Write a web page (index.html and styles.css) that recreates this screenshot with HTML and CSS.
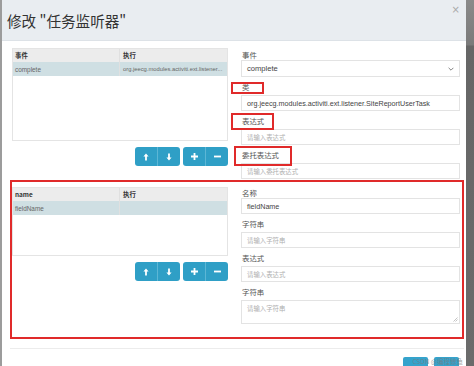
FILE: index.html
```html
<!DOCTYPE html>
<html lang="zh-CN">
<head>
<meta charset="utf-8">
<title>修改 任务监听器</title>
<link rel="stylesheet" href="styles.css">
</head>
<body>
<div class="page">
  <div class="edge-left"></div>
  <div class="modal">
    <header class="modal-header">
      <h1 class="modal-title">修改 "任务监听器"</h1>
      <span class="close">×</span>
    </header>
    <div class="modal-body">
      <section class="group">
        <div class="col-left">
          <div class="table table-tall">
            <div class="tr th"><div class="c1">事件</div><div class="c2">执行</div></div>
            <div class="tr sel"><div class="c1">complete</div><div class="c2 c2-long">org.jeecg.modules.activiti.ext.listener...</div></div>
          </div>
          <div class="btn-row">
            <div class="btn-group">
              <span class="btn"><svg width="6" height="8" viewBox="0 0 6 8"><path d="M3 0.5 L5.6 3.4 L3.9 3.4 L3.9 7.5 L2.1 7.5 L2.1 3.4 L0.4 3.4 Z" fill="#fff"/></svg></span>
              <span class="btn"><svg width="6" height="8" viewBox="0 0 6 8"><path d="M3 7.5 L5.6 4.6 L3.9 4.6 L3.9 0.5 L2.1 0.5 L2.1 4.6 L0.4 4.6 Z" fill="#fff"/></svg></span>
            </div>
            <div class="btn-group">
              <span class="btn"><svg width="7" height="7" viewBox="0 0 7 7"><path d="M2.6 0 H4.4 V2.6 H7 V4.4 H4.4 V7 H2.6 V4.4 H0 V2.6 H2.6 Z" fill="#fff"/></svg></span>
              <span class="btn"><svg width="7" height="7" viewBox="0 0 7 7"><rect x="0" y="2.6" width="7" height="1.8" fill="#fff"/></svg></span>
            </div>
          </div>
        </div>
        <div class="col-right">
          <label class="lbl lbl-first">事件</label>
          <div class="field select"><span>complete</span><svg class="chev" width="6" height="4" viewBox="0 0 6 4"><path d="M0.6 0.8 L3 3.2 L5.4 0.8" fill="none" stroke="#777" stroke-width="0.9"/></svg></div>
          <label class="lbl"><span class="mark mark-1"></span>类</label>
          <div class="field">org.jeecg.modules.activiti.ext.listener.SiteReportUserTask</div>
          <label class="lbl"><span class="mark mark-2"></span>表达式</label>
          <div class="field ph">请输入表达式</div>
          <label class="lbl"><span class="mark mark-3"></span>委托表达式</label>
          <div class="field ph">请输入委托表达式</div>
        </div>
      </section>

      <section class="group group-marked">
        <div class="col-left">
          <div class="table table-short">
            <div class="tr th"><div class="c1">name</div><div class="c2">执行</div></div>
            <div class="tr sel"><div class="c1">fieldName</div><div class="c2"></div></div>
          </div>
          <div class="btn-row">
            <div class="btn-group">
              <span class="btn"><svg width="6" height="8" viewBox="0 0 6 8"><path d="M3 0.5 L5.6 3.4 L3.9 3.4 L3.9 7.5 L2.1 7.5 L2.1 3.4 L0.4 3.4 Z" fill="#fff"/></svg></span>
              <span class="btn"><svg width="6" height="8" viewBox="0 0 6 8"><path d="M3 7.5 L5.6 4.6 L3.9 4.6 L3.9 0.5 L2.1 0.5 L2.1 4.6 L0.4 4.6 Z" fill="#fff"/></svg></span>
            </div>
            <div class="btn-group">
              <span class="btn"><svg width="7" height="7" viewBox="0 0 7 7"><path d="M2.6 0 H4.4 V2.6 H7 V4.4 H4.4 V7 H2.6 V4.4 H0 V2.6 H2.6 Z" fill="#fff"/></svg></span>
              <span class="btn"><svg width="7" height="7" viewBox="0 0 7 7"><rect x="0" y="2.6" width="7" height="1.8" fill="#fff"/></svg></span>
            </div>
          </div>
        </div>
        <div class="col-right">
          <label class="lbl lbl-first">名称</label>
          <div class="field">fieldName</div>
          <label class="lbl">字符串</label>
          <div class="field ph">请输入字符串</div>
          <label class="lbl">表达式</label>
          <div class="field ph">请输入表达式</div>
          <label class="lbl">字符串</label>
          <div class="field ph textarea">请输入字符串<svg class="grip" width="5" height="5" viewBox="0 0 5 5"><path d="M4.5 0.5 L0.5 4.5 M4.5 2.5 L2.5 4.5" stroke="#aaa" stroke-width="0.7"/></svg></div>
        </div>
      </section>
    </div>
    <footer class="modal-footer">
      <span class="fbtn"></span>
      <span class="fbtn"></span>
      <span class="watermark">CSDN @编程鲸鱼</span>
    </footer>
  </div>
  <div class="edge-right"></div>
</div>
</body>
</html>
```

FILE: styles.css
```css
* { box-sizing: border-box; }
html, body { margin: 0; padding: 0; }
body {
  width: 474px;
  height: 366px;
  overflow: hidden;
  font-family: "Liberation Sans", "Noto Sans CJK SC", sans-serif;
  color: #555;
  background: #fff;
}
.page {
  display: flex;
  height: 366px;
  overflow: hidden;
}
.edge-left {
  width: 2px;
  background: #9c9c9c;
  flex: none;
}
.edge-right {
  width: 8px;
  flex: none;
  background: linear-gradient(to bottom, #8a8a8a 0, #7a7a7a 45px, #666 46px, #6b6b6b 100%);
}
.modal {
  width: 464px;
  flex: none;
  background: #fff;
  display: flex;
  flex-direction: column;
  position: relative;
  overflow: hidden;
}
.modal > * { flex: none; }
.modal-header {
  height: 41px;
  background: #e9edf1;
  border-bottom: 1px solid #dde2e7;
  display: flex;
  align-items: center;
  padding: 0 6px 0 5px;
  position: relative;
}
.modal-title {
  margin: 0;
  font-family: "Noto Sans CJK SC", sans-serif;
  font-weight: 400;
  font-size: 14.6px;
  line-height: 18px;
  color: #333;
  margin-top: 2px;
}
.close {
  position: absolute;
  right: 6px;
  top: 4px;
  font-size: 10px;
  color: #aaa;
  font-family: "DejaVu Sans", sans-serif;
}
.modal-body {
  padding: 2px 2px 0 8px;
  display: flex;
  flex-direction: column;
}
.group {
  display: flex;
  gap: 13px;
  padding: 5px 2px 0 2px;
}
.group-marked {
  margin-top: 1px;
  border: 2px solid #e02a2a;
  padding: 5px 0 13px 0;
}
.col-left {
  width: 216px;
  flex: none;
  display: flex;
  flex-direction: column;
}
.col-right {
  width: 219px;
  flex: none;
  display: flex;
  flex-direction: column;
}
.table {
  border: 1px solid #e4e4e4;
  background: #fff;
}
.table-tall { height: 93px; }
.table-short { height: 69px; }
.tr {
  display: flex;
  height: 14px;
  align-items: center;
  font-size: 6.4px;
}
.th {
  background: #ececec;
  color: #333;
  font-weight: 700;
  height: 13px;
}
.sel {
  background: #cfdfe3;
  color: #666;
}
.c1 {
  width: 107px;
  flex: none;
  padding-left: 2px;
  height: 100%;
  display: flex;
  align-items: center;
  border-right: 1px solid #e0e0e0;
}
.c2 {
  flex: 1;
  min-width: 0;
  padding: 0 2px 0 3px;
  white-space: nowrap;
  overflow: hidden;
  line-height: 14px;
}
.c2-long { font-size: 5.8px; }
.th .c1, .th .c2 { font-family: "Noto Sans CJK SC", sans-serif; font-weight: 700; }
.btn-row {
  display: flex;
  justify-content: flex-end;
  gap: 3px;
  margin-top: 6px;
}
.btn-group {
  display: flex;
  border-radius: 3px;
  overflow: hidden;
}
.btn {
  width: 22px;
  height: 19px;
  background: #2f9fc6;
  display: flex;
  align-items: center;
  justify-content: center;
}
.btn + .btn { border-left: 1px solid #5cb6d5; width: 23px; }
.lbl {
  position: relative;
  display: flex;
  align-items: center;
  height: 18px;
  padding-left: 1px;
  font-family: "Noto Sans CJK SC", sans-serif;
  font-size: 7.4px;
  color: #555;
}
.lbl-first { height: 11px; }
.group:first-child .lbl-first { height: 12px; }
.field {
  height: 16px;
  border: 1px solid #e3e3e3;
  display: flex;
  align-items: center;
  padding-left: 5px;
  font-size: 7.2px;
  color: #444;
  white-space: nowrap;
  overflow: hidden;
  background: #fff;
}
.select {
  height: 17px;
  justify-content: space-between;
  padding-right: 5px;
  font-size: 7.6px;
}
.ph {
  font-family: "Noto Sans CJK SC", sans-serif;
  font-size: 6.4px;
  color: #b0b0b0;
}
.textarea {
  height: 24px;
  align-items: flex-start;
  padding-top: 3px;
  position: relative;
}
.grip {
  position: absolute;
  right: 1px;
  bottom: 1px;
}
.mark {
  position: absolute;
  border: 2px solid #e02a2a;
}
.mark-1 { left: -10px; top: 5px; width: 33px; height: 12px; }
.mark-2 { left: -10px; top: 2px; width: 43px; height: 17px; }
.mark-3 { left: -7px; top: 1px; width: 58px; height: 20px; }
.modal-footer {
  margin: 9px 2px 0 8px;
  border-top: 1px solid #ececec;
  padding-top: 8px;
  display: flex;
  justify-content: flex-end;
  gap: 6px;
  padding-right: 5px;
  position: relative;
}
.fbtn {
  width: 25px;
  height: 20px;
  background: #35a3cc;
  border-radius: 2px;
}
.watermark {
  position: absolute;
  right: 1px;
  top: 7px;
  font-family: "Noto Sans CJK SC", sans-serif;
  font-size: 6.5px;
  color: rgba(120, 120, 120, 0.7);
}
```
